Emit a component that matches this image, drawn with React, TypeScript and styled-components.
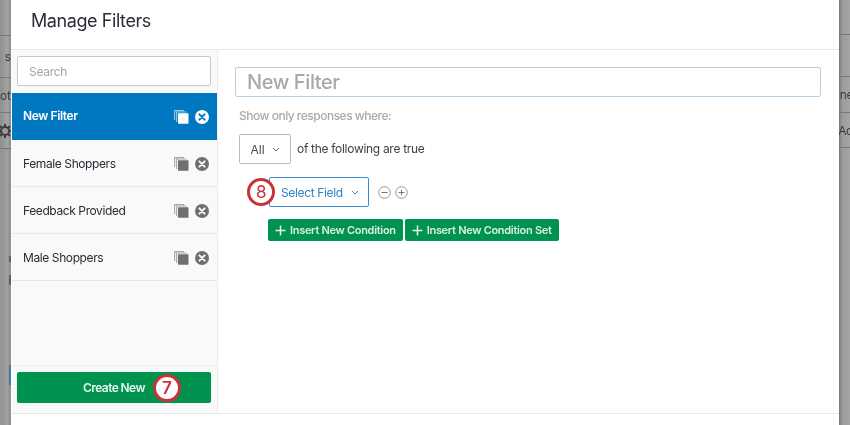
import { FC } from 'react';
import styled, { createGlobalStyle } from 'styled-components';

const filters = ['New Filter', 'Female Shoppers', 'Feedback Provided', 'Male Shoppers'];

const GlobalStyle = createGlobalStyle`
    html, body {
        margin: 0;
        padding: 0;
        height: 425px;
        overflow: hidden;
        background: #8d8d8d;
        font-family: Inter, 'Liberation Sans', sans-serif;
    }
`;

const CopyIcon: FC<{ color: string; back: string }> = ({ color, back }) => (
    <svg width="15" height="14" viewBox="0 0 15 14">
        <path d="M0.6 10V0.6H10" fill="none" stroke={back} strokeWidth="1.1" />
        <path d="M2.6 12V2H12.5" fill="none" stroke={back} strokeWidth="1.1" />
        <rect x="4" y="3.2" width="10.5" height="10.5" rx="0.6" fill={color} />
    </svg>
);

const CloseIcon: FC<{ color: string; cross: string }> = ({ color, cross }) => (
    <svg width="14" height="14" viewBox="0 0 14 14">
        <circle cx="7" cy="7" r="7" fill={color} />
        <path d="M4.4 4.4l5.2 5.2M9.6 4.4l-5.2 5.2" stroke={cross} strokeWidth="2" strokeLinecap="round" />
    </svg>
);

const Chevron: FC<{ color: string }> = ({ color }) => (
    <svg width="8" height="5" viewBox="0 0 8 5">
        <path d="M1 1l3 3 3-3" fill="none" stroke={color} strokeWidth="1" />
    </svg>
);

const RoundIcon: FC<{ plus?: boolean }> = ({ plus }) => (
    <svg width="13" height="13" viewBox="0 0 13 13">
        <circle cx="6.5" cy="6.5" r="5.8" fill="none" stroke="#8a8a8a" strokeWidth="0.9" />
        <path d={plus ? 'M3.5 6.5h6M6.5 3.5v6' : 'M3.5 6.5h6'} stroke="#777" strokeWidth="1" />
    </svg>
);

const PlusIcon = () => (
    <svg width="11" height="11" viewBox="0 0 11 11">
        <path d="M5.5 0.5v10M0.5 5.5h10" stroke="#e6f4ec" strokeWidth="1.5" />
    </svg>
);

const GearIcon = () => (
    <svg width="16" height="16" viewBox="0 0 16 16">
        <circle cx="8" cy="8" r="4" fill="none" stroke="#3f3f3f" strokeWidth="2" />
        <path d="M8 1v3M8 12v3M1 8h3M12 8h3M3 3l2 2M11 11l2 2M13 3l-2 2M5 11l-2 2" stroke="#3f3f3f" strokeWidth="2" />
    </svg>
);

export default function App() {
    return (
        <Page>
            <GlobalStyle />
            <LeftStrip>
                <StripRow $height={36} />
                <StripRow $height={42}><StripText>s</StripText></StripRow>
                <StripRow $height={35}><StripText>ot</StripText></StripRow>
                <StripRow $height={36}><GearSlot><GearIcon /></GearSlot></StripRow>
                <StripRest>
                    <StripMark $top={107} $height={6} $color="#6e5a50" />
                    <StripMark $top={13} $height={10} $color="#6e5a50" />
                    <StripMark $top={80} $height={20} $color="#4a78a8" />
                </StripRest>
            </LeftStrip>
            <Modal>
                <Header>Manage Filters</Header>
                <Body>
                    <Sidebar>
                        <SearchWrap>
                            <SearchBox>Search</SearchBox>
                        </SearchWrap>
                        <FilterList>
                            {filters.map((name, i) => (
                                <FilterRow key={name} $active={i === 0}>
                                    <FilterName $active={i === 0}>{name}</FilterName>
                                    <RowIcons>
                                        <CopyIcon color={i === 0 ? '#fff' : '#6f6f6f'} back={i === 0 ? '#9cc8e6' : '#a8a8a8'} />
                                        <CloseIcon color={i === 0 ? '#fff' : '#6f6f6f'} cross={i === 0 ? '#0078c1' : '#f8f9f9'} />
                                    </RowIcons>
                                </FilterRow>
                            ))}
                        </FilterList>
                        <SidebarFooter>
                            <CreateButton>
                                <CreateLabel>Create New</CreateLabel>
                                <CreateBadge>7</CreateBadge>
                            </CreateButton>
                        </SidebarFooter>
                    </Sidebar>
                    <Editor>
                        <NameInput>New Filter</NameInput>
                        <Hint>Show only responses where:</Hint>
                        <MatchRow>
                            <AllSelect>
                                All
                                <Chevron color="#666" />
                            </AllSelect>
                            <MatchText>of the following are true</MatchText>
                        </MatchRow>
                        <ConditionRow>
                            <FieldSelect>
                                Select Field
                                <Chevron color="#3a8ccc" />
                                <FieldBadge>8</FieldBadge>
                            </FieldSelect>
                            <RoundIcons>
                                <RoundIcon />
                                <RoundIcon plus />
                            </RoundIcons>
                        </ConditionRow>
                        <ButtonRow>
                            <GreenButton>
                                <PlusIcon />
                                Insert New Condition
                            </GreenButton>
                            <GreenButton>
                                <PlusIcon />
                                Insert New Condition Set
                            </GreenButton>
                        </ButtonRow>
                    </Editor>
                </Body>
                <ModalFooter />
            </Modal>
            <RightStrip>
                <StripRow $height={35} />
                <StripRow $height={42} />
                <StripRow $height={36}><RightText>ne</RightText></StripRow>
                <StripRow $height={35}><RightText>Ad</RightText></StripRow>
                <StripBlank />
            </RightStrip>
        </Page>
    );
}

const Page = styled.div`
    display: grid;
    grid-template-columns: 11px 828px 11px;
    width: 850px;
    height: 425px;
    overflow: hidden;
    filter: blur(0.35px);
`;

const LeftStrip = styled.div`
    display: flex;
    flex-direction: column;
    background: linear-gradient(to right, #8f8f8f, #a3a3a3 70%, #8a8a8a);
    overflow: hidden;
`;

const RightStrip = styled(LeftStrip)`
    background: linear-gradient(to right, #777, #9c9c9c 30%, #a5a5a5);
`;

const StripRow = styled.div<{ $height: number }>`
    display: flex;
    align-items: center;
    justify-content: flex-end;
    flex: none;
    height: ${({ $height }) => $height}px;
    box-sizing: border-box;
    border-bottom: 1px solid #777;
    overflow: hidden;
`;

const StripRest = styled.div`
    flex: 1;
    display: flex;
    flex-direction: column;
    align-items: flex-end;
    background-image:
        linear-gradient(#979797 1px, transparent 1px),
        linear-gradient(to right, #979797 1px, transparent 1px);
    background-size: 4px 8px;
`;

const StripBlank = styled.div`
    flex: 1;
`;

const StripMark = styled.div<{ $top: number; $height: number; $color: string }>`
    flex: none;
    width: 2px;
    height: ${({ $height }) => $height}px;
    margin-top: ${({ $top }) => $top}px;
    background: ${({ $color }) => $color};
`;

const StripText = styled.span`
    font-size: 12px;
    color: #3c3c3c;
    white-space: nowrap;
`;

const RightText = styled(StripText)`
    margin-right: -3px;
    letter-spacing: -0.4px;
`;

const GearSlot = styled.div`
    display: flex;
    margin-right: -2px;
`;

const Modal = styled.div`
    display: flex;
    flex-direction: column;
    background: #fff;
    min-width: 0;
`;

const Header = styled.div`
    flex: none;
    box-sizing: border-box;
    height: 50px;
    padding: 11px 0 0 20px;
    border-bottom: 1px solid #e8eaea;
    font-size: 18px;
    letter-spacing: -0.42px;
    line-height: 20px;
    color: #2b2b35;
`;

const Body = styled.div`
    flex: none;
    display: flex;
    height: 363px;
`;

const Sidebar = styled.div`
    flex: none;
    display: flex;
    flex-direction: column;
    box-sizing: border-box;
    width: 206px;
    margin-left: 1px;
    background: #f8f9f9;
    border-right: 1px solid #eceeee;
`;

const SearchWrap = styled.div`
    flex: none;
    padding: 6px 6px 7px 5px;
`;

const SearchBox = styled.div`
    box-sizing: border-box;
    height: 30px;
    padding-left: 11px;
    border: 1px solid #c9c9c9;
    border-radius: 2px;
    background: #fff;
    font-size: 12px;
    letter-spacing: -0.3px;
    line-height: 29px;
    color: #a5a5a5;
`;

const FilterList = styled.div`
    flex: 1;
`;

const FilterRow = styled.div<{ $active: boolean }>`
    display: flex;
    align-items: center;
    justify-content: space-between;
    box-sizing: border-box;
    height: 47px;
    padding: 0 8px 0 11px;
    background: ${({ $active }) => ($active ? '#0078c1' : 'transparent')};
    border-bottom: 1px solid ${({ $active }) => ($active ? '#0078c1' : '#e6e8e8')};
`;

const FilterName = styled.span<{ $active: boolean }>`
    font-size: 12px;
    letter-spacing: -0.4px;
    font-weight: ${({ $active }) => ($active ? 600 : 400)};
    color: ${({ $active }) => ($active ? '#fff' : '#2b2b35')};
    position: relative;
    top: ${({ $active }) => ($active ? '-1px' : '0')};
`;

const RowIcons = styled.div`
    display: flex;
    align-items: center;
    gap: 6px;
    padding-top: 2px;
`;

const SidebarFooter = styled.div`
    flex: none;
    height: 48px;
    box-sizing: border-box;
    padding: 6px 6px 0 5px;
    border-top: 1px solid #eceeee;
`;

const CreateButton = styled.div`
    position: relative;
    display: flex;
    align-items: center;
    justify-content: center;
    height: 31px;
    background: #00924f;
    border-radius: 2px;
`;

const CreateLabel = styled.span`
    font-size: 12px;
    font-weight: 600;
    letter-spacing: -0.6px;
    color: #e8f5ee;
`;

const Badge = styled.span`
    position: absolute;
    display: flex;
    align-items: center;
    justify-content: center;
    box-sizing: border-box;
    width: 28px;
    height: 28px;
    border: 3px solid #c8333a;
    border-radius: 50%;
    background: #fff;
    color: #c8333a;
    font-size: 17px;
    font-weight: 400;
`;

const CreateBadge = styled(Badge)`
    left: 136px;
    top: 2px;
    font-weight: 600;
`;

const FieldBadge = styled(Badge)`
    left: -23px;
    top: 0;
`;

const Editor = styled.div`
    flex: 1;
    min-width: 0;
    padding: 17px 18px 0 17px;
`;

const NameInput = styled.div`
    box-sizing: border-box;
    height: 30px;
    padding-left: 11px;
    border: 1px solid #b9cfe2;
    border-radius: 2px;
    font-size: 20px;
    font-weight: 500;
    letter-spacing: -0.4px;
    line-height: 28px;
    color: #a8a8a8;
`;

const Hint = styled.div`
    margin: 11px 0 0 4px;
    font-size: 12px;
    font-weight: 500;
    letter-spacing: -0.5px;
    line-height: 16px;
    color: #a9a9a9;
`;

const MatchRow = styled.div`
    display: flex;
    align-items: center;
    gap: 6px;
    margin: 10px 0 0 4px;
`;

const AllSelect = styled.div`
    display: flex;
    align-items: center;
    justify-content: center;
    gap: 7px;
    box-sizing: border-box;
    width: 52px;
    height: 30px;
    border: 1px solid #bcbcbc;
    border-radius: 2px;
    font-size: 12px;
    color: #4a4a4a;
`;

const MatchText = styled.span`
    font-size: 12px;
    letter-spacing: -0.3px;
    color: #3f3f3f;
    position: relative;
    top: -1px;
`;

const ConditionRow = styled.div`
    display: flex;
    align-items: center;
    gap: 9px;
    margin: 13px 0 0 34px;
`;

const FieldSelect = styled.div`
    position: relative;
    display: flex;
    align-items: center;
    gap: 8px;
    box-sizing: border-box;
    width: 100px;
    height: 30px;
    padding-left: 11px;
    border: 1px solid #3a8ccc;
    border-radius: 2px;
    font-size: 12px;
    letter-spacing: -0.35px;
    color: #2f84c6;
`;

const RoundIcons = styled.div`
    display: flex;
    gap: 4px;
`;

const ButtonRow = styled.div`
    display: flex;
    gap: 2px;
    margin: 12px 0 0 33px;
`;

const GreenButton = styled.div`
    display: flex;
    align-items: center;
    gap: 4px;
    box-sizing: border-box;
    height: 22px;
    padding: 0 7px;
    background: #00924f;
    border-radius: 2px;
    font-size: 11px;
    font-weight: 600;
    letter-spacing: -0.3px;
    color: #d9efe3;
    white-space: nowrap;
`;

const ModalFooter = styled.div`
    flex: 1;
    border-top: 1px solid #e8eaea;
`;
